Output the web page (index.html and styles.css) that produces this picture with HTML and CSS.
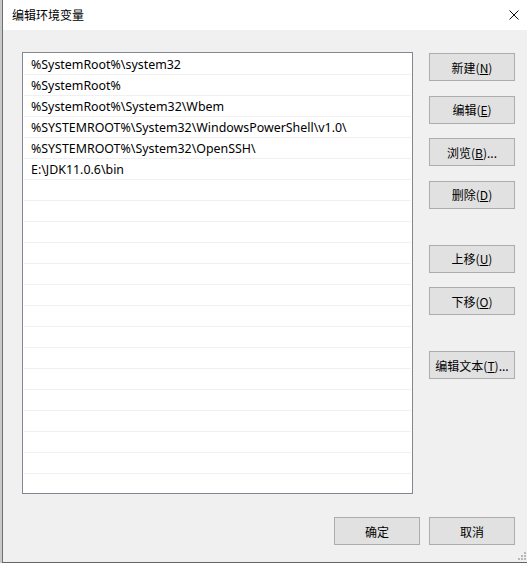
FILE: index.html
```html
<!DOCTYPE html>
<html lang="zh-CN">
<head>
    <meta charset="UTF-8">
    <title>编辑环境变量</title>
    <link rel="stylesheet" href="styles.css">
</head>
<body>
    <div class="dialog">
        <div class="title-bar">
            <span class="title">编辑环境变量</span>
            <span class="close-btn">
                <svg width="10" height="10" viewBox="0 0 10 10">
                    <path d="M0.5 0.5 L9.5 9.5 M9.5 0.5 L0.5 9.5" stroke="#111" stroke-width="1" fill="none"/>
                </svg>
            </span>
        </div>
        <div class="client">
            <div class="main-row">
                <div class="path-list">
                    <div class="path-item">%SystemRoot%\system32</div>
                    <div class="path-item">%SystemRoot%</div>
                    <div class="path-item">%SystemRoot%\System32\Wbem</div>
                    <div class="path-item">%SYSTEMROOT%\System32\WindowsPowerShell\v1.0\</div>
                    <div class="path-item">%SYSTEMROOT%\System32\OpenSSH\</div>
                    <div class="path-item">E:\JDK11.0.6\bin</div>
                    <div class="path-item"></div>
                    <div class="path-item"></div>
                    <div class="path-item"></div>
                    <div class="path-item"></div>
                    <div class="path-item"></div>
                    <div class="path-item"></div>
                    <div class="path-item"></div>
                    <div class="path-item"></div>
                    <div class="path-item"></div>
                    <div class="path-item"></div>
                    <div class="path-item"></div>
                    <div class="path-item"></div>
                    <div class="path-item"></div>
                    <div class="path-item"></div>
                    <div class="path-item"></div>
                </div>
                <div class="side-buttons">
                    <button class="btn">新建(<u>N</u>)</button>
                    <button class="btn">编辑(<u>E</u>)</button>
                    <button class="btn">浏览(<u>B</u>)...</button>
                    <button class="btn">删除(<u>D</u>)</button>
                    <button class="btn btn-sep">上移(<u>U</u>)</button>
                    <button class="btn">下移(<u>O</u>)</button>
                    <button class="btn btn-sep">编辑文本(<u>T</u>)...</button>
                </div>
            </div>
            <div class="bottom-row">
                <button class="btn">确定</button>
                <button class="btn">取消</button>
            </div>
            <div class="grip">
                <i></i><i></i><i></i><i></i><i></i><i></i>
            </div>
        </div>
    </div>
</body>
</html>
```

FILE: styles.css
```css
body {
    margin: 0;
    padding: 0;
    width: 527px;
    height: 563px;
    overflow: hidden;
    background-color: #c9c9c9;
    font-family: 'Segoe UI', 'Noto Sans', 'Noto Sans CJK SC', sans-serif;
    font-size: 12px;
    color: #000;
}
.dialog {
    margin-left: 2px;
    height: 563px;
    box-sizing: border-box;
    border-left: 1px solid #707070;
    border-bottom: 1px solid #646464;
    display: flex;
    flex-direction: column;
}
.title-bar {
    height: 30px;
    background-color: #ffffff;
    display: flex;
    align-items: center;
    justify-content: space-between;
    padding-left: 9px;
    padding-right: 8px;
    flex-shrink: 0;
}
.title {
    font-family: 'Noto Sans CJK SC', sans-serif;
    font-size: 12px;
    margin-top: -1px;
}
.close-btn {
    display: flex;
    width: 10px;
    height: 10px;
    margin-top: -1px;
}
.client {
    position: relative;
    flex-grow: 1;
    background-color: #f0f0f0;
    padding: 22px 12px 17px 19px;
    display: flex;
    flex-direction: column;
}
.main-row {
    display: flex;
    height: 442px;
}
.path-list {
    width: 391px;
    height: 442px;
    box-sizing: border-box;
    border: 1px solid #828790;
    background-color: #ffffff;
    padding-top: 1px;
    overflow: hidden;
}
.path-item {
    height: 20px;
    line-height: 21px;
    margin: 0 1px;
    padding-left: 7px;
    border-bottom: 1px solid #f0f0f0;
    white-space: nowrap;
    font-size: 12.4px;
}
.side-buttons {
    margin-left: 16px;
    padding-top: 1px;
    display: flex;
    flex-direction: column;
    gap: 14.5px;
}
.btn {
    width: 86px;
    height: 28px;
    background-color: #e1e1e1;
    border: 1px solid #adadad;
    border-radius: 0;
    font-family: 'Noto Sans CJK SC', sans-serif;
    font-size: 12px;
    color: #000;
    padding: 0;
    margin: 0;
}
.btn u {
    text-underline-offset: 1px;
}
.btn-sep {
    margin-top: 21.5px;
}
.bottom-row {
    margin-top: 23px;
    display: flex;
    justify-content: flex-end;
    gap: 9px;
}
.grip {
    position: absolute;
    right: 1px;
    bottom: 2px;
    width: 8px;
    height: 8px;
}
.grip i {
    position: absolute;
    width: 2px;
    height: 2px;
    background-color: #b9b9b9;
}
.grip i:nth-child(1) { right: 0; top: 0; }
.grip i:nth-child(2) { right: 3px; top: 3px; }
.grip i:nth-child(3) { right: 0; top: 3px; }
.grip i:nth-child(4) { right: 6px; top: 6px; }
.grip i:nth-child(5) { right: 3px; top: 6px; }
.grip i:nth-child(6) { right: 0; top: 6px; }
```
